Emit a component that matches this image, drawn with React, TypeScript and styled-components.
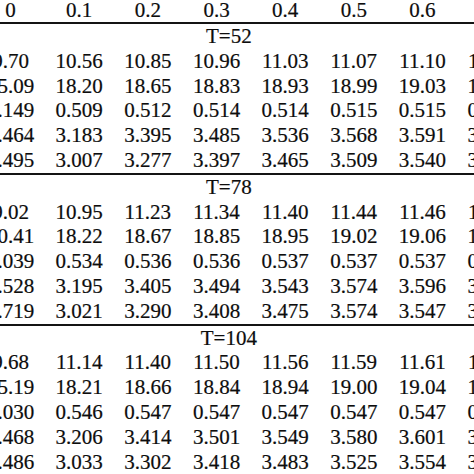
import React from "react";
import styled, { createGlobalStyle } from "styled-components";

const GlobalStyle = createGlobalStyle`
  html, body {
    margin: 0;
    padding: 0;
    background: #ffffff;
    overflow: hidden;
  }
  body {
    font-family: "Liberation Serif", "Times New Roman", serif;
    color: #0d0d0d;
  }
`;

const COL_W = 68.67;

const Frame = styled.div`
  width: 474px;
  height: 474px;
  overflow: hidden;
  background: #fff;
`;

const Sheet = styled.div`
  margin-left: -23.8px;
  width: ${COL_W * 8}px;
  font-size: 21px;
  -webkit-text-stroke: 0.2px #0d0d0d;
`;

const Row = styled.div<{ height?: number; lead?: number }>`
  display: grid;
  grid-template-columns: repeat(8, ${COL_W}px);
  height: ${(p) => p.height ?? 24.8}px;
  line-height: ${(p) => p.lead ?? p.height ?? 24.8}px;
  white-space: nowrap;
`;

const Cell = styled.div`
  text-align: center;
  overflow: visible;
`;

const Rule = styled.div`
  height: 2px;
  background: #141414;
`;

const Caption = styled.div`
  height: 24.8px;
  line-height: 24.8px;
  text-align: center;
  /* label sits a bit left of the visible columns' middle */
  padding-right: 44px;
`;

const header = ["0", "0.1", "0.2", "0.3", "0.4", "0.5", "0.6", "0.7"];

interface Block {
  label: string;
  rows: string[][];
}

const blocks: Block[] = [
  {
    label: "T=52",
    rows: [
      ["9.70", "10.56", "10.85", "10.96", "11.03", "11.07", "11.10", "11.12"],
      ["15.09", "18.20", "18.65", "18.83", "18.93", "18.99", "19.03", "19.06"],
      ["0.149", "0.509", "0.512", "0.514", "0.514", "0.515", "0.515", "0.516"],
      ["3.464", "3.183", "3.395", "3.485", "3.536", "3.568", "3.591", "3.608"],
      ["3.495", "3.007", "3.277", "3.397", "3.465", "3.509", "3.540", "3.563"],
    ],
  },
  {
    label: "T=78",
    rows: [
      ["9.02", "10.95", "11.23", "11.34", "11.40", "11.44", "11.46", "11.48"],
      ["10.41", "18.22", "18.67", "18.85", "18.95", "19.02", "19.06", "19.09"],
      ["0.039", "0.534", "0.536", "0.536", "0.537", "0.537", "0.537", "0.537"],
      ["3.528", "3.195", "3.405", "3.494", "3.543", "3.574", "3.596", "3.612"],
      ["3.719", "3.021", "3.290", "3.408", "3.475", "3.574", "3.547", "3.561"],
    ],
  },
  {
    label: "T=104",
    rows: [
      ["9.68", "11.14", "11.40", "11.50", "11.56", "11.59", "11.61", "11.63"],
      ["15.19", "18.21", "18.66", "18.84", "18.94", "19.00", "19.04", "19.07"],
      ["0.030", "0.546", "0.547", "0.547", "0.547", "0.547", "0.547", "0.547"],
      ["3.468", "3.206", "3.414", "3.501", "3.549", "3.580", "3.601", "3.616"],
      ["3.486", "3.033", "3.302", "3.418", "3.483", "3.525", "3.554", "3.576"],
    ],
  },
];

const App: React.FC = () => {
  return (
    <>
      <GlobalStyle />
      <Frame>
        <Sheet>
          <Row height={22} lead={20}>
            {header.map((h) => (
              <Cell key={h}>{h}</Cell>
            ))}
          </Row>
          {blocks.map((b) => (
            <React.Fragment key={b.label}>
              <Rule />
              <Caption>{b.label}</Caption>
              {b.rows.map((r, i) => (
                <Row key={i}>
                  {r.map((v, j) => (
                    <Cell key={j}>{v}</Cell>
                  ))}
                </Row>
              ))}
            </React.Fragment>
          ))}
        </Sheet>
      </Frame>
    </>
  );
};

export default App;
